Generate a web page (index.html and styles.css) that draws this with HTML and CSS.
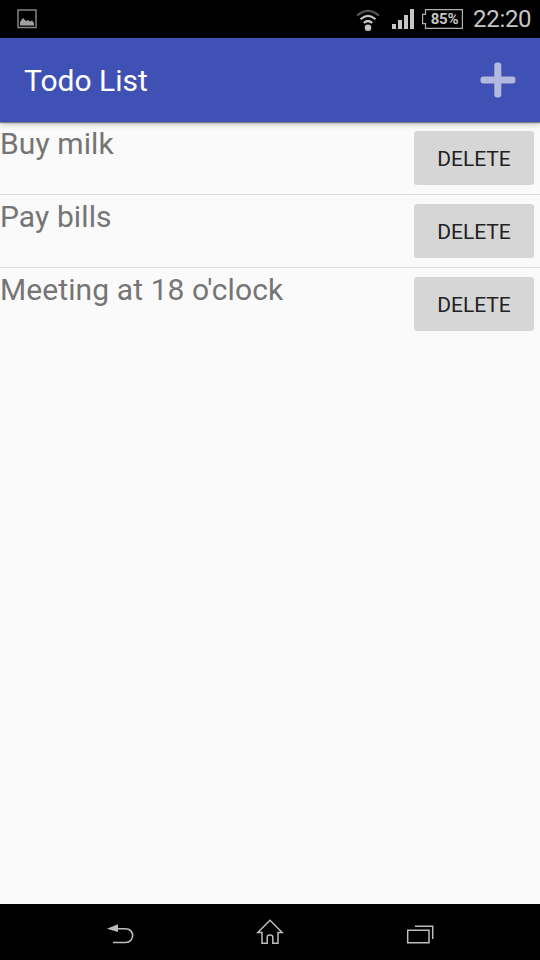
FILE: index.html
```html
<!DOCTYPE html>
<html lang="en">
<head>
<meta charset="utf-8">
<title>Todo List</title>
<link rel="stylesheet" href="styles.css">
</head>
<body>
<div class="screen">
  <div class="status">
    <svg class="status-picture" width="20" height="20" viewBox="0 0 20 20"><rect x="1" y="1" width="18" height="17.5" fill="none" stroke="#858585" stroke-width="1.5"/><path d="M3 16.5V13L6 9L9 12L11 11L13 12.5L15 11.5L17 14V16.5Z" fill="#a0a0a0"/></svg>
    <svg class="status-wifi" width="24" height="24" viewBox="0 0 24 24" fill="none" stroke-width="2.2"><path d="M1.2 6.6Q12 -2.8 22.8 6.6" stroke="#555"/><path d="M4.5 10.2Q12 3.5 19.5 10.2M7.8 14Q12 10 16.2 14" stroke="#c6c6c6"/><circle cx="12" cy="18.8" r="3.3" fill="#c6c6c6"/></svg>
    <svg class="status-signal" width="22" height="20" viewBox="0 0 22 20" fill="#c6c6c6"><path d="M0 15h4v5H0zM6 11h4v9H6zM12 6h4v14h-4zM18 0h4v20h-4z"/></svg>
    <div class="battery">
      <svg width="41" height="20" viewBox="0 0 41 20" fill="none" stroke="#b0b0b0" stroke-width="1.2"><path d="M3.5 .6H40.4V19.4H3.5V14.6H.6V5.4H3.5Z"/></svg>
      <span class="battery-level">85%</span>
    </div>
    <span class="clock">22:20</span>
  </div>
  <header class="appbar">
    <h1 class="title">Todo List</h1>
    <svg width="36" height="36" viewBox="0 0 36 36" fill="#b2b8e0"><path d="M14.3 3.5a3 3 0 0 1 3-3h1a3 3 0 0 1 3 3V14.4H32.5a3 3 0 0 1 3 3v1a3 3 0 0 1-3 3H21.3V32.5a3 3 0 0 1-3 3h-1a3 3 0 0 1-3-3V21.4H3.5a3 3 0 0 1-3-3v-1a3 3 0 0 1 3-3H14.3Z"/></svg>
  </header>
  <main class="list">
    <div class="row"><span class="task">Buy milk</span><button class="delete">DELETE</button></div>
    <div class="row"><span class="task">Pay bills</span><button class="delete">DELETE</button></div>
    <div class="row"><span class="task">Meeting at 18 o'clock</span><button class="delete">DELETE</button></div>
  </main>
  <nav class="navbar">
    <svg width="50" height="56" viewBox="0 0 50 56"><path d="M21 24.7H30.5C40 24.7 40 38.5 30.5 38.5H18" fill="none" stroke="#bdbdbd" stroke-width="1.6"/><path d="M12 24.8L23 20.3V28Z" fill="#bdbdbd"/></svg>
    <svg width="50" height="56" viewBox="0 0 50 56" fill="none" stroke="#bdbdbd" stroke-width="1.5"><path d="M25 16.3L12.8 28.5H17V39.2H22.2V33Q22.2 31 25 31Q27.8 31 27.8 33V39.2H33V28.5H37.2Z"/></svg>
    <svg width="50" height="56" viewBox="0 0 50 56" fill="none" stroke="#bdbdbd" stroke-width="1.5"><path d="M12.7 26.3H34V38.8H12.7ZM20 22.3H37.7V35"/></svg>
  </nav>
</div>
</body>
</html>
```
FILE: styles.css
```css
body {
  margin: 0;
  font-family: Roboto, "Liberation Sans", sans-serif;
}

.screen {
  width: 540px;
  height: 960px;
  display: flex;
  flex-direction: column;
  background: #fafafa;
}

.status {
  height: 38px;
  box-sizing: border-box;
  padding: 0 8px 0 17px;
  display: flex;
  align-items: center;
  background: #000;
}

.status-picture { margin-right: auto; }
.status-wifi { margin: 3px 12px 0 0; }
.status-signal { margin-right: 8px; }

.battery {
  position: relative;
  width: 41px;
  height: 20px;
  margin-right: 10px;
}

.battery svg { display: block; }

.battery-level {
  position: absolute;
  inset: 0 0 0 4px;
  text-align: center;
  font-size: 15px;
  font-weight: 700;
  line-height: 21px;
  letter-spacing: -0.3px;
  color: #c6c6c6;
}

.clock {
  width: 59px;
  font-size: 24px;
  line-height: 38px;
  letter-spacing: -0.3px;
  color: #c6c6c6;
}

.appbar {
  position: relative;
  height: 84px;
  flex: none;
  box-sizing: border-box;
  padding: 0 24px;
  display: flex;
  align-items: center;
  justify-content: space-between;
  background: #3f51b5;
  box-shadow: 0 1px 1px rgba(0, 0, 0, 0.4), 0 2px 6px rgba(0, 0, 0, 0.25);
}

.title {
  margin: 0;
  font-size: 30px;
  font-weight: 400;
  color: #fff;
}

.list { flex: 1; }

.row {
  height: 72px;
  display: flex;
  justify-content: space-between;
}

.row + .row { border-top: 1px solid #dedede; }

.task {
  font-size: 30px;
  line-height: 35px;
  padding-top: 4px;
  letter-spacing: 0.1px;
  color: #757575;
}

.delete {
  width: 120px;
  height: 54px;
  margin: 9px 6px 0 0;
  padding: 2px 0 0;
  border: 0;
  border-radius: 3px;
  background: #d6d6d6;
  font-family: inherit;
  font-size: 21px;
  color: #212121;
}

.navbar {
  height: 56px;
  padding: 0 95px;
  display: flex;
  justify-content: space-between;
  background: #000;
}
```
